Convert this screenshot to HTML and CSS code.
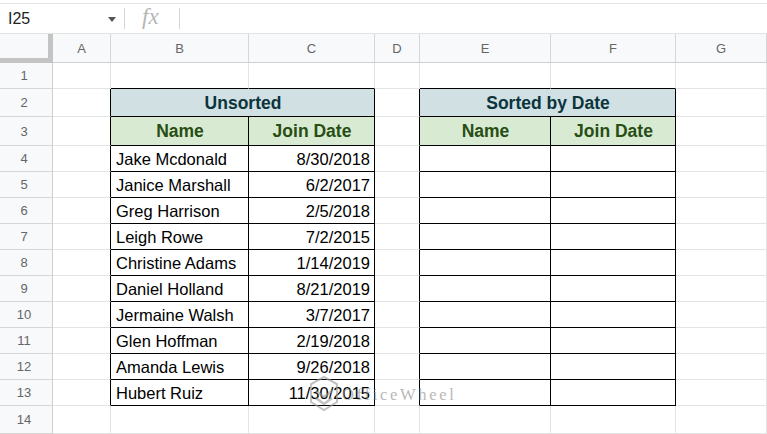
FILE: index.html
```html
<!DOCTYPE html>
<html>
<head>
<meta charset="utf-8">
<link rel="stylesheet" href="styles.css">
</head>
<body>
<div class="fbar">
  <div class="namebox"><span class="ref">I25</span><span class="caret"></span></div>
  <div class="sep"></div>
  <div class="fx">fx</div>
  <div class="sep"></div>
</div>
<div class="sheet">
  <div class="corner"></div><div class="ch">A</div><div class="ch">B</div><div class="ch">C</div><div class="ch">D</div><div class="ch">E</div><div class="ch">F</div><div class="ch">G</div>

  <div class="rh">1</div><div class="c"></div><div class="c bt"></div><div class="c bt"></div><div class="c"></div><div class="c bt"></div><div class="c bt"></div><div class="c"></div>

  <div class="rh">2</div><div class="c bl"></div><div class="t h1 span2">Unsorted</div><div class="c bl"></div><div class="t h1 span2">Sorted by Date</div><div class="c"></div>

  <div class="rh">3</div><div class="c bl"></div><div class="t h2">Name</div><div class="t h2">Join Date</div><div class="c bl"></div><div class="t h2">Name</div><div class="t h2">Join Date</div><div class="c"></div>

  <div class="rh">4</div><div class="c bl"></div><div class="t">Jake Mcdonald</div><div class="t r">8/30/2018</div><div class="c bl"></div><div class="t"></div><div class="t"></div><div class="c"></div>
  <div class="rh">5</div><div class="c bl"></div><div class="t">Janice Marshall</div><div class="t r">6/2/2017</div><div class="c bl"></div><div class="t"></div><div class="t"></div><div class="c"></div>
  <div class="rh">6</div><div class="c bl"></div><div class="t">Greg Harrison</div><div class="t r">2/5/2018</div><div class="c bl"></div><div class="t"></div><div class="t"></div><div class="c"></div>
  <div class="rh">7</div><div class="c bl"></div><div class="t">Leigh Rowe</div><div class="t r">7/2/2015</div><div class="c bl"></div><div class="t"></div><div class="t"></div><div class="c"></div>
  <div class="rh">8</div><div class="c bl"></div><div class="t">Christine Adams</div><div class="t r">1/14/2019</div><div class="c bl"></div><div class="t"></div><div class="t"></div><div class="c"></div>
  <div class="rh">9</div><div class="c bl"></div><div class="t">Daniel Holland</div><div class="t r">8/21/2019</div><div class="c bl"></div><div class="t"></div><div class="t"></div><div class="c"></div>
  <div class="rh">10</div><div class="c bl"></div><div class="t">Jermaine Walsh</div><div class="t r">3/7/2017</div><div class="c bl"></div><div class="t"></div><div class="t"></div><div class="c"></div>
  <div class="rh">11</div><div class="c bl"></div><div class="t">Glen Hoffman</div><div class="t r">2/19/2018</div><div class="c bl"></div><div class="t"></div><div class="t"></div><div class="c"></div>
  <div class="rh">12</div><div class="c bl"></div><div class="t">Amanda Lewis</div><div class="t r">9/26/2018</div><div class="c bl"></div><div class="t"></div><div class="t"></div><div class="c"></div>
  <div class="rh">13</div><div class="c bl"></div><div class="t">Hubert Ruiz</div><div class="t r">11/30/2015</div><div class="c bl"></div><div class="t"></div><div class="t"></div><div class="c"></div>

  <div class="rh">14</div><div class="c"></div><div class="c"></div><div class="c"></div><div class="c"></div><div class="c"></div><div class="c"></div><div class="c"></div>
</div>
<div class="wm">
  <svg class="wm-logo" width="30" height="38" viewBox="0 0 30 38">
    <path d="M15 2 L28 9 L28 27 L15 35 L2 27 L2 9 Z" fill="none" stroke="#9a9a9a" stroke-width="2"/>
    <path d="M7 16 L15 22 L23 16" fill="none" stroke="#9a9a9a" stroke-width="2.5"/>
    <path d="M7 23 L15 29 L23 23" fill="none" stroke="#9a9a9a" stroke-width="2.5"/>
  </svg>
  <span class="wm-text">OfficeWheel</span>
</div>
</body>
</html>
```

FILE: styles.css
```css
html, body {
  margin: 0;
  padding: 0;
  background: #ffffff;
  overflow: hidden;
  width: 767px;
  height: 434px;
}

body {
  font-family: Arial, "Liberation Sans", sans-serif;
  position: relative;
}

.fbar {
  margin-top: 3px;
  height: 29px;
  border-top: 1px solid #e3e3e3;
  border-bottom: 1px solid #e3e3e3;
  display: flex;
  align-items: center;
  box-sizing: content-box;
}

.namebox {
  width: 124px;
  display: flex;
  align-items: center;
  padding-left: 8px;
  box-sizing: border-box;
}

.ref {
  font-size: 16px;
  color: #222;
  flex: 1;
}

.caret {
  width: 0;
  height: 0;
  border-left: 4px solid transparent;
  border-right: 4px solid transparent;
  border-top: 5px solid #555;
  margin-right: 8px;
  margin-top: 2px;
}

.sep {
  width: 1px;
  height: 21px;
  background: #d6d6d6;
}

.fx {
  font-family: "Liberation Serif", "DejaVu Serif", serif;
  font-style: italic;
  font-size: 23px;
  color: #b5b5b5;
  width: 54px;
  padding-left: 17px;
  box-sizing: border-box;
  margin-top: -3px;
}

.sheet {
  display: grid;
  grid-template-columns: 53px 58px 138px 126px 45px 131px 125px 1fr;
  grid-template-rows: 29px 26px 28px 29px repeat(10, 26px) 28px;
}

.corner {
  background: #f8f9fa;
  border-right: 5px solid #c4c4c4;
  border-bottom: 5px solid #c4c4c4;
  box-sizing: border-box;
}

.ch {
  background: #f8f9fa;
  border-right: 1px solid #d6d6d6;
  border-bottom: 1px solid #cfcfcf;
  box-sizing: border-box;
  display: flex;
  align-items: center;
  justify-content: center;
  font-size: 13px;
  color: #666;
  padding-top: 1px;
}

.rh {
  background: #f8f9fa;
  border-right: 1px solid #cfcfcf;
  border-bottom: 1px solid #d6d6d6;
  box-sizing: border-box;
  display: flex;
  align-items: center;
  justify-content: center;
  font-size: 13px;
  color: #666;
  padding-right: 4px;
}

.c {
  border-right: 1px solid #e2e3e3;
  border-bottom: 1px solid #e2e3e3;
  box-sizing: border-box;
}

.bt {
  border-bottom-color: #000;
}

.bl {
  border-right-color: #000;
}

.t {
  border-right: 1px solid #000;
  border-bottom: 1px solid #000;
  box-sizing: border-box;
  display: flex;
  align-items: center;
  padding: 1px 4px 0 5px;
  font-size: 16.5px;
  color: #000;
  white-space: nowrap;
  overflow: hidden;
}

.r {
  justify-content: flex-end;
}

.span2 {
  grid-column: span 2;
}

.h1 {
  background: #d0e0e3;
  justify-content: center;
  font-weight: bold;
  font-size: 17.5px;
  color: #0c343d;
}

.h2 {
  background: #d9ead3;
  justify-content: center;
  font-weight: bold;
  font-size: 17.5px;
  color: #274e13;
}

.wm {
  position: absolute;
  left: 309px;
  top: 375px;
  display: flex;
  align-items: center;
  gap: 3px;
  opacity: 0.6;
  pointer-events: none;
}

.wm-text {
  font-family: "Liberation Serif", "DejaVu Serif", serif;
  font-size: 16.5px;
  letter-spacing: 2.7px;
  color: #8a8a8a;
  margin-top: 2px;
}
```
